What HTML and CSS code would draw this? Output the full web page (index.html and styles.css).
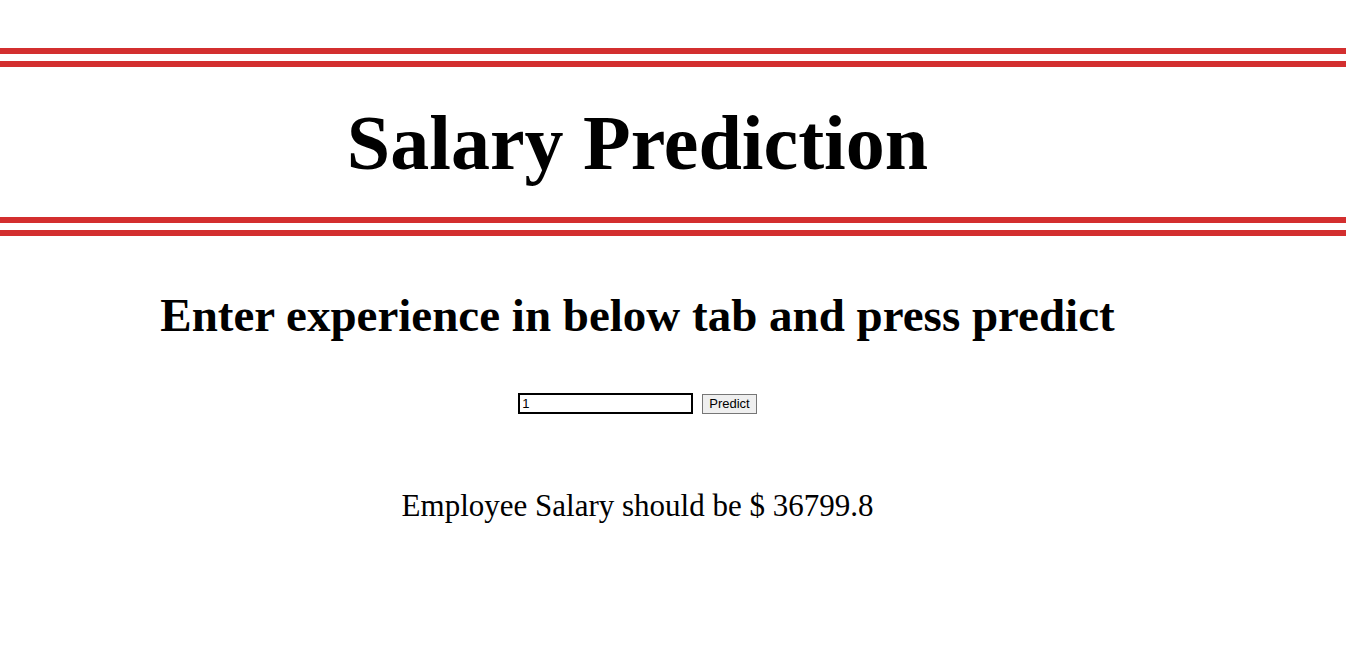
FILE: index.html
```html
<!DOCTYPE html>
<html lang="en">
<head>
  <meta charset="UTF-8">
  <meta name="viewport" content="width=device-width, initial-scale=1.0">
  <title>Salary Prediction</title>
  <link rel="stylesheet" href="styles.css">
</head>
<body>
  <div class="banner">
    <h1 class="title">Salary Prediction</h1>
  </div>

  <div id="container">
    <h2 class="subtitle">Enter experience in below tab and press predict</h2>

    <form class="predict-form" onsubmit="return false;">
      <input class="input-text" type="text" name="experience" value="1">
      <button class="button-text" type="submit">Predict</button>
    </form>

    <p id="result">Employee Salary should be $ 36799.8</p>
  </div>
</body>
</html>
```

FILE: styles.css
```css
body {
  margin: 0;
  font-family: "Liberation Serif", "Times New Roman", serif;
  color: #000;
  background: #fff;
}

.banner {
  margin-top: 48px;
  border-top: 19px double #d32f2f;
  border-bottom: 19px double #d32f2f;
}

.title {
  width: 1275px;
  height: 150px;
  box-sizing: border-box;
  margin: 0;
  padding-top: 31px;
  text-align: center;
  font-size: 78px;
  font-weight: bold;
}

#container {
  width: 1275px;
  display: flex;
  flex-direction: column;
  align-items: center;
}

.subtitle {
  margin: 52px 0 0 0;
  font-size: 47px;
  font-weight: bold;
}

.predict-form {
  margin-top: 51px;
  display: flex;
  align-items: center;
  gap: 9px;
}

.input-text {
  box-sizing: border-box;
  width: 175px;
  height: 21px;
  padding: 1px 2px;
  border: 2px solid #000;
  border-radius: 0;
  font-family: Arial, "Liberation Sans", sans-serif;
  font-size: 13px;
  color: #000;
  outline: none;
}

.button-text {
  box-sizing: border-box;
  height: 20px;
  padding: 0 6px;
  border: 1px solid #767676;
  border-radius: 0;
  background: #efefef;
  font-family: Arial, "Liberation Sans", sans-serif;
  font-size: 13px;
  color: #000;
  cursor: pointer;
}

#result {
  margin: 74px 0 0 0;
  font-size: 31px;
}
```
